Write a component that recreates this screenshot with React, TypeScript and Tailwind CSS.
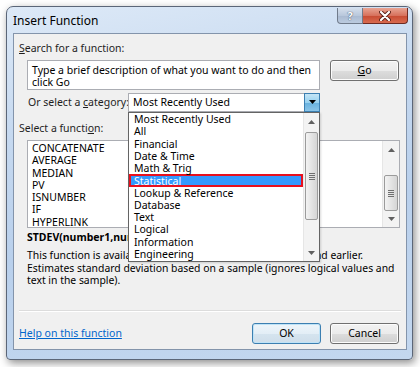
import React from 'react';

const categories = [
  'Most Recently Used',
  'All',
  'Financial',
  'Date & Time',
  'Math & Trig',
  'Statistical',
  'Lookup & Reference',
  'Database',
  'Text',
  'Logical',
  'Information',
  'Engineering',
];

const functions = ['CONCATENATE', 'AVERAGE', 'MEDIAN', 'PV', 'ISNUMBER', 'IF', 'HYPERLINK'];

const Arrow = ({ up = false, color = '#606060' }: { up?: boolean; color?: string }) => (
  <svg width="7" height="4" viewBox="0 0 7 4">
    {up ? <path d="M0 4 L3.5 0 L7 4 Z" fill={color} /> : <path d="M0 0 L7 0 L3.5 4 Z" fill={color} />}
  </svg>
);

const Thumb = ({ h }: { h: number }) => (
  <div
    className="mx-[1px] rounded-[2px] border border-[#9b9b9b] bg-[linear-gradient(90deg,#f3f3f3,#e4e4e4_50%,#d5d5d5)] flex flex-col items-center justify-center gap-[1px]"
    style={{ height: h }}
  >
    <div className="w-[6px] h-[1px] bg-[#6f6f6f]" />
    <div className="w-[6px] h-[1px] bg-[#6f6f6f]" />
    <div className="w-[6px] h-[1px] bg-[#6f6f6f]" />
    <div className="w-[6px] h-[1px] bg-[#6f6f6f]" />
  </div>
);

const Button = ({ children, primary = false }: { children: React.ReactNode; primary?: boolean }) => (
  <div
    className={
      primary
        ? 'w-[69px] h-[21px] rounded-[3px] border border-[#3c7fb1] shadow-[inset_0_0_0_1px_#bfe3f7] bg-[linear-gradient(#eef5fa,#e3eef6_50%,#d5e4ef_51%,#cfdeea)] flex items-center justify-center text-black'
        : 'w-[69px] h-[21px] rounded-[3px] border border-[#707070] shadow-[inset_0_0_0_1px_#fcfcfc] bg-[linear-gradient(#f2f2f2,#ebebeb_50%,#dddddd_51%,#cfcfcf)] flex items-center justify-center text-black'
    }
  >
    {children}
  </div>
);

export default function App() {
  return (
    <div className="w-[420px] h-[367px] bg-white relative overflow-hidden font-['Noto_Sans',sans-serif] text-[10.5px] text-[#1e1e1e]">
      <div className="absolute left-[6px] top-[6px] w-[407px] h-[354px] rounded-t-[7px] rounded-b-[4px] border border-[#5b6678] shadow-[2px_3px_8px_rgba(0,0,0,0.45)] bg-[linear-gradient(170deg,#dde9f7,#c6d9f0_30%,#b9d0ec_60%,#c3d7ef)] flex flex-col">
        {/* title bar */}
        <div className="h-[26px] flex items-start">
          <div className="pl-[6px] pt-[7px] text-[12px] leading-[14px] text-black">Insert Function</div>
          <div className="ml-auto flex mr-[4px] mt-[1px]">
            <div className="w-[26px] h-[16px] rounded-bl-[4px] border border-[#707b8b] border-t-0 bg-[linear-gradient(#d5dfec,#b9c8dc_50%,#a9bad1_51%,#bccbdf)] flex items-center justify-center">
              <span className="text-[11px] font-bold leading-none text-white [text-shadow:0_0_1px_#44546a,0_0_1px_#44546a]">?</span>
            </div>
            <div className="w-[45px] h-[16px] rounded-br-[4px] border border-[#6d2a22] border-t-0 border-l-0 bg-[linear-gradient(#e8a493,#d7725d_50%,#c74a32_51%,#d86b4f)] flex items-center justify-center">
              <svg width="12" height="10" viewBox="0 0 12 10">
                <path d="M2 1 L10 9 M10 1 L2 9" stroke="#5a2018" strokeWidth="4" strokeLinecap="round" />
                <path d="M2 1 L10 9 M10 1 L2 9" stroke="#ffffff" strokeWidth="2.2" strokeLinecap="round" />
              </svg>
            </div>
          </div>
        </div>

        {/* client area */}
        <div className="mx-[6px] w-[394px] h-[317px] border border-[#8394ab] bg-[#f0f0f0] relative flex flex-col">
          <div className="pt-[8px] pl-[5px] h-[20px] leading-[12px]">
            <span className="underline">S</span>earch for a function:
          </div>
          <div className="mt-[6px] flex items-start">
            <div className="ml-[13px] w-[293px] h-[30px] border border-[#abadb3] bg-white pl-[4px] pt-[3px] text-[10.5px] leading-[12px] text-black whitespace-nowrap">
              Type a brief description of what you want to do and then
              <br />
              click Go
            </div>
            <div className="ml-[10px]">
              <Button>
                <span className="underline">G</span>o
              </Button>
            </div>
          </div>
          <div className="mt-[3px] h-[19px] flex items-center">
            <div className="ml-[14px] w-[100px] whitespace-nowrap">
              Or select a <span className="underline">c</span>ategory:
            </div>
            <div className="w-[192px] h-[19px] border border-[#abadb3] bg-white flex items-center">
              <div className="pl-[4px] flex-1 text-black">Most Recently Used</div>
              <div className="w-[16px] h-[19px] -mt-[2px] -mb-[1px] -mr-[1px] border border-[#3c7fb1] bg-[linear-gradient(#c4e5f6,#98d1ef_50%,#67b1de_51%,#8ac4e8)] flex items-center justify-center">
                <Arrow color="#000000" />
              </div>
            </div>
          </div>
          <div className="mt-[10px] pl-[5px] h-[12px] leading-[12px]">
            Select a functi<span className="underline">o</span>n:
          </div>
          <div className="mt-[6px] ml-[13px] w-[373px] h-[88px] border border-[#abadb3] bg-white flex">
            <div className="flex-1 pl-[4px] pt-[1px] text-black">
              {functions.map((f) => (
                <div key={f} className="h-[12.25px] leading-[12.25px]">
                  {f}
                </div>
              ))}
            </div>
            <div className="w-[17px] h-full bg-[#f3f3f3] border-l border-[#e6e6e6] flex flex-col">
              <div className="h-[17px] flex items-center justify-center">
                <Arrow up />
              </div>
              <div className="h-[17px]" />
              <Thumb h={36} />
              <div className="flex-1 flex items-center justify-center">
                <Arrow />
              </div>
            </div>
          </div>
          <div className="mt-[3px] ml-[13px] h-[12px] leading-[12px] font-bold text-black">
            STDEV(number1,number2,...)
          </div>
          <div className="mt-[6px] ml-[13px] text-[10.4px] leading-[12.5px] text-black whitespace-nowrap">
            This function is available for compatibility with Excel 2007 and earlier.
            <br />
            Estimates standard deviation based on a sample (ignores logical values and
            <br />
            text in the sample).
          </div>
          <div className="mt-auto mx-[5px] h-[1px] bg-[#dcdcdc] border-b border-white box-content" />
          <div className="h-[37px] flex items-start pt-[11px] pl-[5px] pr-[7px]">
            <span className="mt-[3px] text-[#0066cc] underline">Help on this function</span>
            <div className="ml-auto flex gap-[9px]">
              <Button primary>OK</Button>
              <Button>Cancel</Button>
            </div>
          </div>

          {/* open category dropdown */}
          <div className="absolute left-[114px] top-[78px] w-[192px] h-[150px] border border-[#646464] bg-white flex shadow-[1px_1px_2px_rgba(0,0,0,0.15)]">
            <div className="flex-1 text-black">
              {categories.map((c) =>
                c === 'Statistical' ? (
                  <div
                    key={c}
                    className="h-[12.25px] leading-[10px] pl-[3px] bg-[#3399ff] text-white border-2 border-[#e8101e]"
                  >
                    {c}
                  </div>
                ) : (
                  <div key={c} className="h-[12.25px] leading-[12.25px] pl-[5px]">
                    {c}
                  </div>
                )
              )}
            </div>
            <div className="w-[16px] h-full bg-[#f3f3f3] border-l border-[#e6e6e6] flex flex-col">
              <div className="h-[17px] flex items-center justify-center">
                <Arrow up />
              </div>
              <div className="h-[2px]" />
              <Thumb h={88} />
              <div className="flex-1" />
              <div className="h-[17px] flex items-center justify-center">
                <Arrow />
              </div>
            </div>
          </div>
        </div>
      </div>
    </div>
  );
}
